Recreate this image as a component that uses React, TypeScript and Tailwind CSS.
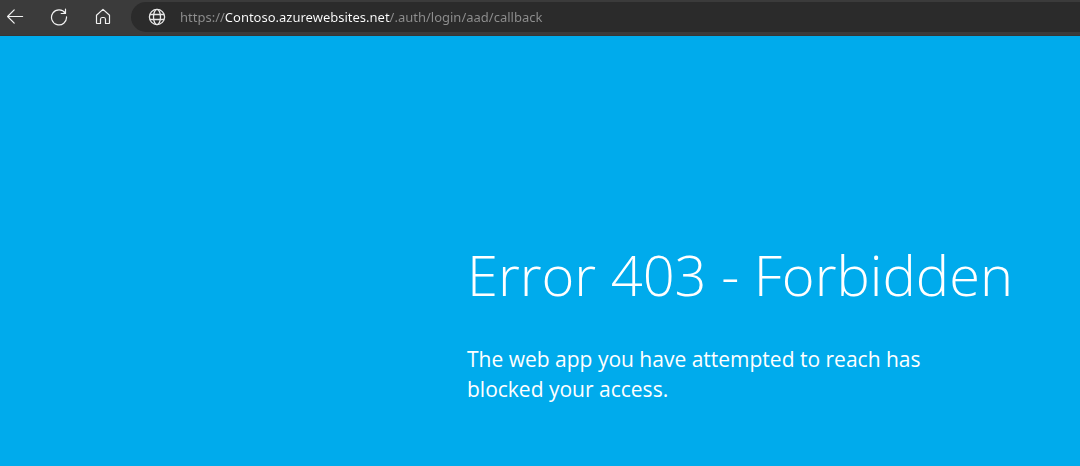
const addressUrl = 'https://Contoso.azurewebsites.net/.auth/login/aad/callback';

function BackIcon() {
    return (
        <svg width="18" height="18" viewBox="0 0 18 18" fill="none" stroke="#f2f2f2" strokeWidth="1.2" strokeLinecap="round" strokeLinejoin="round">
            <path d="M16.6 8.5H1.6M8.2 1.9L1.6 8.5L8.2 15.1" />
        </svg>
    );
}

function RefreshIcon() {
    return (
        <svg width="18" height="18" viewBox="0 0 18 18" fill="none" stroke="#f2f2f2" strokeWidth="1.2" strokeLinecap="round" strokeLinejoin="round">
            <path d="M15.5 1.2V5.5H11.2M15.3 5.3A7.5 7.5 0 1 0 16.5 8.8" />
        </svg>
    );
}

function HomeIcon() {
    return (
        <svg width="18" height="18" viewBox="0 0 18 18" fill="none" stroke="#f2f2f2" strokeWidth="1.2" strokeLinejoin="round">
            <path d="M2.5 7.3L9 1.4L15.5 7.3V15Q15.5 15.5 15 15.5H11.5V11.5Q11.5 9.5 10 9.5H8Q6.5 9.5 6.5 11.5V15.5H3Q2.5 15.5 2.5 15Z" />
        </svg>
    );
}

function GlobeIcon() {
    return (
        <svg width="18" height="18" viewBox="0 0 18 18" fill="none" stroke="#e6e6e6" strokeWidth="1.3">
            <circle cx="9" cy="9" r="7.6" />
            <ellipse cx="9" cy="9" rx="3.5" ry="7.6" />
            <path d="M2 6.5H16M2 11.5H16" />
        </svg>
    );
}

export default function App() {
    return (
        <div className="flex min-h-screen flex-col bg-[#00abec]">
            {/* Browser toolbar */}
            <header className="flex h-9 items-center border-b border-[#363636] bg-[#3b3b3b] pb-px">
                <nav className="flex items-center gap-[26px] pl-[6px]">
                    <button type="button" aria-label="Back">
                        <BackIcon />
                    </button>
                    <button type="button" aria-label="Refresh">
                        <RefreshIcon />
                    </button>
                    <button type="button" aria-label="Home">
                        <HomeIcon />
                    </button>
                </nav>
                <div className="ml-[19px] flex h-[30px] flex-1 items-center gap-[14px] rounded-l-full bg-[#2b2b2b] pl-[17px]">
                    <GlobeIcon />
                    {/* Scheme and path are dimmed, the host stays white */}
                    <input
                        type="text"
                        aria-label="Address"
                        defaultValue={addressUrl}
                        className="min-w-0 flex-1 bg-[linear-gradient(to_right,#8f8f8f_45px,#ffffff_45px,#ffffff_210px,#8f8f8f_210px)] bg-clip-text font-['Noto_Sans',sans-serif] text-[13px] leading-5 text-transparent caret-white outline-none"
                    />
                </div>
            </header>

            {/* Error message */}
            <main className="flex-1 pt-[198px] pr-6 pl-[467px] text-white">
                <h1 className="font-['Open_Sans',sans-serif] text-[56px] leading-[80px] font-light whitespace-nowrap">
                    Error 403 - Forbidden
                </h1>
                <p className="mt-[30px] max-w-[480px] font-['Open_Sans',sans-serif] text-[21px] leading-[30px]">
                    The web app you have attempted to reach has blocked your access.
                </p>
            </main>
        </div>
    );
}
